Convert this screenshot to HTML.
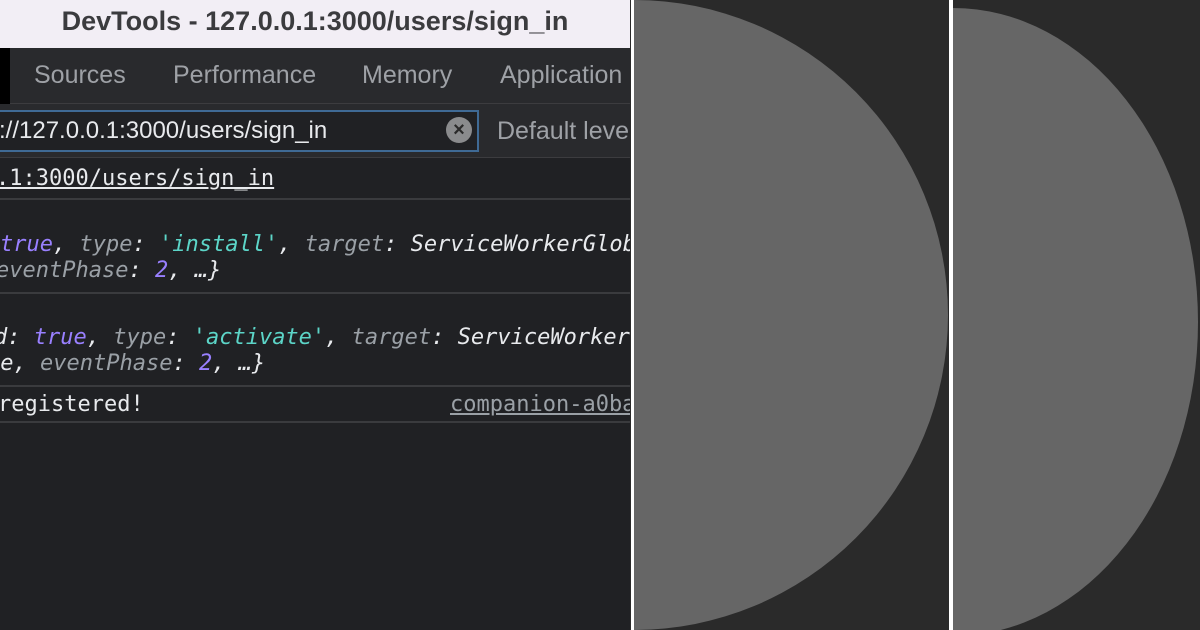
<!DOCTYPE html>
<html><head><style>
*{margin:0;padding:0;box-sizing:border-box}
body{width:1200px;height:630px;overflow:hidden;background:#2a2a2a;position:relative;font-family:"Liberation Sans",sans-serif}
#l{position:absolute;left:0;top:0;width:630px;height:630px;background:#202124;overflow:hidden}
.title{position:absolute;left:0;top:0;width:630px;height:48px;background:#f2eef5;color:#3b3b3e;font-weight:bold;font-size:27px;line-height:42px;text-align:center}
.tabs{position:absolute;top:48px;left:0;width:630px;height:56px;background:#292a2d;border-bottom:1px solid #3c3c3f}
.tabs span{position:absolute;top:13px;font-size:25px;color:#9ea1a6;white-space:nowrap}
.filter{position:absolute;top:104px;left:0;width:630px;height:54px;background:#292a2d;border-bottom:1px solid #3c3c3f}
.inp{position:absolute;left:-5px;top:6px;width:484px;height:42px;border:2px solid #3f6a95;background:#202124;color:#e8eaed;font-size:24px;padding-left:2px;line-height:38px}
.x{position:absolute;left:446px;top:117px;width:26px;height:26px;border-radius:50%;background:#8a8b8d;color:#2a2a2a;text-align:center;line-height:26px;font-size:20px;font-weight:bold}
.mono{font-family:"DejaVu Sans Mono","Liberation Mono",monospace;font-size:22px;position:absolute;white-space:pre;color:#e8eaed}
.sep{position:absolute;left:0;width:630px;height:2px;background:#3a3b3e}
i{font-style:italic}
.g{color:#9aa0a6}.p{color:#9980ff}.c{color:#5cd5c8}
</style></head><body>
<div id="l">
<div class="title">DevTools - 127.0.0.1:3000/users/sign_in</div>
<div class="tabs"><div style="position:absolute;left:0;top:0;width:10px;height:56px;background:#000"></div>
<span style="left:34px">Sources</span><span style="left:173px">Performance</span><span style="left:362px">Memory</span><span style="left:500px">Application</span></div>
<div class="filter"><div class="inp">://127.0.0.1:3000/users/sign_in</div>
<span style="position:absolute;left:497px;top:13px;font-size:25px;color:#9ea1a6;white-space:nowrap">Default level</span></div>
<div class="x">×</div>
<div class="mono" style="top:166px;left:-4px;text-decoration:underline">.1:3000/users/sign_in</div>
<div class="sep" style="top:198px"></div>
<div class="mono" style="top:232px;left:0"><i><span class="p">true</span>, <span class="g">type</span>: <span class="c">'install'</span>, <span class="g">target</span>: ServiceWorkerGlob</i></div>
<div class="mono" style="top:258px;left:-4px"><i><span class="g">eventPhase</span>: <span class="p">2</span>, …}</i></div>
<div class="sep" style="top:292px"></div>
<div class="mono" style="top:325px;left:-6px"><i>d: <span class="p">true</span>, <span class="g">type</span>: <span class="c">'activate'</span>, <span class="g">target</span>: ServiceWorker</i></div>
<div class="mono" style="top:351px;left:-13px"><i>pe, <span class="g">eventPhase</span>: <span class="p">2</span>, …}</i></div>
<div class="sep" style="top:385px"></div>
<div class="mono" style="top:392px;left:-2px">registered!</div>
<div class="mono" style="top:392px;left:450px;color:#9aa0a6;text-decoration:underline">companion-a0ba</div>
<div class="sep" style="top:421px"></div>
</div>
<div style="position:absolute;left:631px;top:0;width:3px;height:630px;background:#fff"></div>
<div style="position:absolute;left:949px;top:0;width:4px;height:630px;background:#fff"></div>
<svg style="position:absolute;left:634px;top:0" width="315" height="630"><ellipse cx="0" cy="315" rx="314" ry="315" fill="#666"/></svg>
<svg style="position:absolute;left:953px;top:0" width="247" height="630"><ellipse cx="0" cy="322" rx="245" ry="314" fill="#666"/></svg>
</body></html>
